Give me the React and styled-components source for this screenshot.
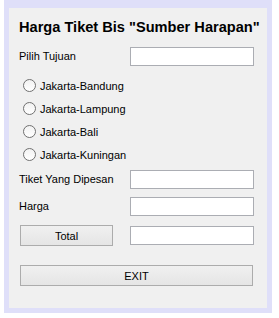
import React from 'react'
import styled, { createGlobalStyle } from 'styled-components'

const Global = createGlobalStyle`
  body {
    margin: 0;
    background: #ffffff;
    font-family: "Liberation Sans", Arial, sans-serif;
  }
`

const Frame = styled.div`
  margin-left: 4px;
  width: 268px;
  height: 313px;
  box-sizing: border-box;
  border: 5px solid #dfdff9;
  border-top-width: 8px;
  background: #f0f0f0;
`

const Panel = styled.div`
  padding: 10px 0 0 10px;
  display: flex;
  flex-direction: column;
`

const Title = styled.h1`
  margin: 0;
  font-family: "Liberation Sans", Arial, sans-serif;
  font-weight: bold;
  font-size: 14.6px;
  line-height: 18px;
  color: #000;
  white-space: nowrap;
`

const Row = styled.div`
  display: flex;
  align-items: center;
  gap: ${p => p.gap || 0}px;
  height: ${p => p.h || 20}px;
  margin-top: ${p => p.mt || 0}px;
`

const Label = styled.span`
  width: 111px;
  font-size: 11px;
  color: #000;
`

const Field = styled.input`
  width: 124px;
  height: 19px;
  box-sizing: border-box;
  border: 1px solid #abadb3;
  background: #fff;
  padding: 0 3px;
  outline: none;
`

const RadioGroup = styled.div`
  display: flex;
  flex-direction: column;
  margin-top: 8px;
`

const RadioRow = styled.label`
  display: flex;
  align-items: center;
  height: 23px;
  padding-left: 4px;
  gap: 4px;
  font-size: 11px;
  color: #000;
`

const Circle = styled.span`
  width: 11px;
  height: 11px;
  border-radius: 50%;
  border: 1px solid #707070;
  background: linear-gradient(#f2f2f2, #ffffff);
  flex: none;
`

const Button = styled.button`
  width: ${p => p.w}px;
  height: 21px;
  box-sizing: border-box;
  border: 1px solid #acacac;
  background: linear-gradient(#f0f0f0, #e5e5e5);
  font-family: "Liberation Sans", Arial, sans-serif;
  font-size: 11px;
  color: #000;
  padding: 0;
  margin-left: 1px;
`

const tujuan = ['Jakarta-Bandung', 'Jakarta-Lampung', 'Jakarta-Bali', 'Jakarta-Kuningan']

export default function App() {
  return (
    <>
      <Global />
      <Frame>
        <Panel>
          <Title>Harga Tiket Bis "Sumber Harapan"</Title>
          <Row mt={10}>
            <Label>Pilih Tujuan</Label>
            <Field />
          </Row>
          <RadioGroup>
            {tujuan.map(t => (
              <RadioRow key={t}>
                <Circle />
                {t}
              </RadioRow>
            ))}
          </RadioGroup>
          <Row mt={3}>
            <Label>Tiket Yang Dipesan</Label>
            <Field />
          </Row>
          <Row mt={7}>
            <Label>Harga</Label>
            <Field />
          </Row>
          <Row mt={9} h={21} gap={17}>
            <Button w={93}>Total</Button>
            <Field />
          </Row>
          <Row mt={19} h={21}>
            <Button w={233}>EXIT</Button>
          </Row>
        </Panel>
      </Frame>
    </>
  )
}
